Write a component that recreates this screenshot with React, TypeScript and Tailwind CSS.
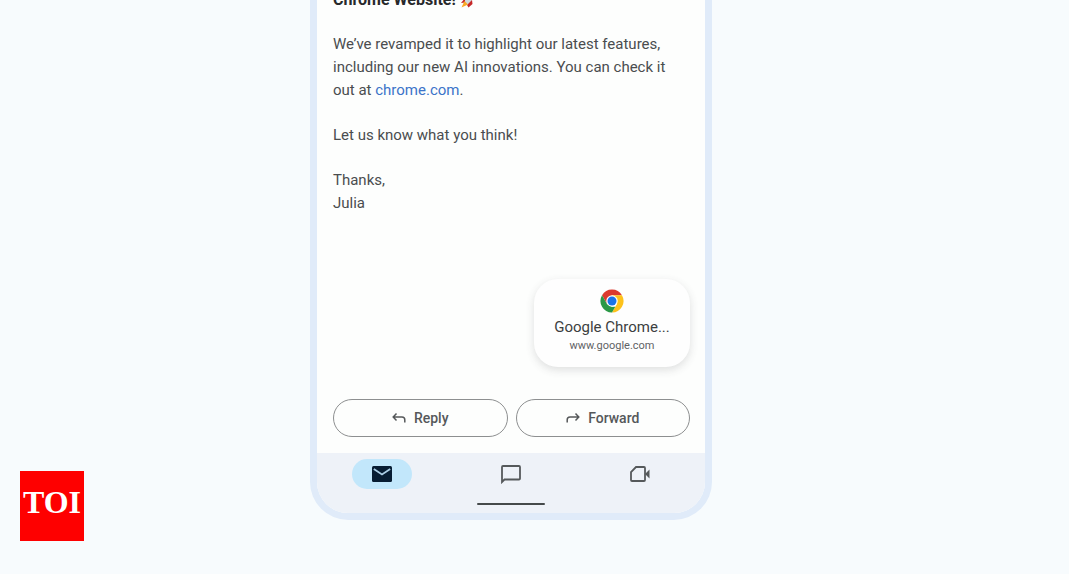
import type { ReactNode } from "react";

function ChromeLogo() {
  return (
    <svg viewBox="0 0 48 48" className="w-6 h-6" aria-hidden="true">
      <path d="M4.08 12.5 A23 23 0 0 1 43.92 12.5 H24 L14.04 29.75 Z" fill="#db3a2e" />
      <path d="M24 12.5 H43.92 A23 23 0 0 1 24 47 L33.96 29.75 Z" fill="#fdc21c" />
      <path d="M4.08 12.5 L14.04 29.75 L24 35.5 H30.6 L24 47 A23 23 0 0 1 4.08 12.5 Z" fill="#2a9846" />
      <circle cx="24" cy="24" r="11.5" fill="#fff" />
      <circle cx="24" cy="24" r="9" fill="#1a73e8" />
    </svg>
  );
}

function Rocket() {
  return (
    <svg viewBox="0 0 16 16" className="inline-block w-4 h-4 align-[-3px]" aria-hidden="true">
      <path d="M4 10 C6 5 10 1 15 1 C15 6 11 10 7 13 Z" fill="#cfd8dc" />
      <path d="M5 6 L1 11 L5 10.5 Z" fill="#c62828" />
      <path d="M7 13 L12 8 L12.5 12 L8.5 15.5 Z" fill="#c62828" />
      <path d="M4.5 9 L8 12.5 L1.5 15.5 Z" fill="#f9a825" />
      <circle cx="11" cy="5" r="1.5" fill="#1976d2" />
    </svg>
  );
}

function ReplyArrow() {
  return (
    <svg viewBox="0 0 14 12" className="w-[14px] h-3" fill="none" stroke="currentColor" strokeWidth="1.5" aria-hidden="true">
      <path d="M4.5 1.5 L1.2 5 L4.5 8.5 M1.5 5 H10 Q12.8 5 12.8 7.8 V10.5" />
    </svg>
  );
}

function ForwardArrow() {
  return (
    <svg viewBox="0 0 14 12" className="w-[14px] h-3" fill="none" stroke="currentColor" strokeWidth="1.5" aria-hidden="true">
      <path d="M9.5 1.5 L12.8 5 L9.5 8.5 M12.5 5 H4 Q1.2 5 1.2 7.8 V10.5" />
    </svg>
  );
}

function ActionButton({ icon, children }: { icon: ReactNode; children: ReactNode }) {
  return (
    <button
      type="button"
      className="flex-1 h-[38px] flex items-center justify-center gap-2 rounded-full border border-[#8d8f90] text-[#55585a] text-sm font-medium"
    >
      {icon}
      {children}
    </button>
  );
}

function NavButton({ label, active, children }: { label: string; active?: boolean; children: ReactNode }) {
  return (
    <button
      type="button"
      aria-label={label}
      className={`w-[60px] h-[30px] flex items-center justify-center rounded-full ${
        active ? "bg-[#c2e7fb]" : ""
      }`}
    >
      {children}
    </button>
  );
}

export default function App() {
  return (
    <div className="min-h-screen bg-[#f7fbfd] border-b-[6px] border-[#fdfefe] grid grid-cols-[1fr_402px_1fr] pr-[47px] pb-[33px] font-[Roboto,sans-serif]">
      <a
        href="#toi"
        className="self-end justify-self-start ml-5 w-16 h-[70px] flex items-center justify-center bg-[#fe0000] text-white text-[32px] leading-8 font-bold pb-2 font-['Liberation_Serif',serif]"
      >
        TOI
      </a>

      <main className="self-start rounded-b-[38px] border-x-[7px] border-b-[7px] border-[#e0ebf9] bg-[#fdfefd] overflow-hidden">
        <article className="pl-4 pr-[15px] pb-4 overflow-hidden">
          <div className="flex flex-col gap-[22px] text-[15px] leading-[23px] text-[#4a4d4f]">
            <h1 className="-mt-3 text-base leading-[23px] font-bold text-[#27292b]">
              Chrome Website! <Rocket />
            </h1>
            <p>
              We’ve revamped it to highlight our latest features, including our new AI innovations. You can check it
              out at <a href="#chrome" className="text-[#3b74c9]">chrome.com</a>.
            </p>
            <p>Let us know what you think!</p>
            <p>
              Thanks,
              <br />
              Julia
            </p>
          </div>

          <a
            href="#google"
            className="ml-auto mt-16 w-[156px] h-[88px] pt-2.5 flex flex-col items-center rounded-3xl bg-[#fefefe] shadow-[0_3px_8px_rgba(60,64,67,0.16)]"
          >
            <ChromeLogo />
            <span className="mt-1 text-[15px] leading-5 text-[#3c3f41]">Google Chrome...</span>
            <span className="text-[11px] leading-[18px] text-[#5f6265]">www.google.com</span>
          </a>

          <div className="mt-8 flex gap-2">
            <ActionButton icon={<ReplyArrow />}>Reply</ActionButton>
            <ActionButton icon={<ForwardArrow />}>Forward</ActionButton>
          </div>
        </article>

        <nav className="bg-[#eef2f8] pt-1.5 pb-2">
          <div className="pl-[35px] pr-[35px] flex justify-between">
            <NavButton label="Mail" active>
              <svg viewBox="0 0 20 16" className="w-5 h-4">
                <rect width="20" height="16" rx="1.5" fill="#071d33" />
                <path d="M1.8 3 L10 8.5 L18.2 3" fill="none" stroke="#a9cce4" strokeWidth="1.8" />
              </svg>
            </NavButton>
            <NavButton label="Chat">
              <svg viewBox="0 0 20 19" className="w-5 h-[19px]" fill="none" stroke="#55595b" strokeWidth="1.8">
                <path d="M1 17 V2 Q1 1 2 1 H18 Q19 1 19 2 V13.5 Q19 14.5 18 14.5 H3.5 Z" />
              </svg>
            </NavButton>
            <NavButton label="Meet">
              <svg viewBox="0 0 20 16" className="w-5 h-4" fill="none" stroke="#55595b" strokeWidth="1.8">
                <path d="M6 1 H14 Q15 1 15 2 V14 Q15 15 14 15 H2 Q1 15 1 14 V6 Z" />
                <path d="M15 8 L19.5 3.5 V12.5 Z" fill="#55595b" stroke="none" />
              </svg>
            </NavButton>
          </div>
          <div className="mx-auto mt-3.5 w-[68px] h-0.5 rounded-full bg-[#454a4b]" />
        </nav>
      </main>
    </div>
  );
}
